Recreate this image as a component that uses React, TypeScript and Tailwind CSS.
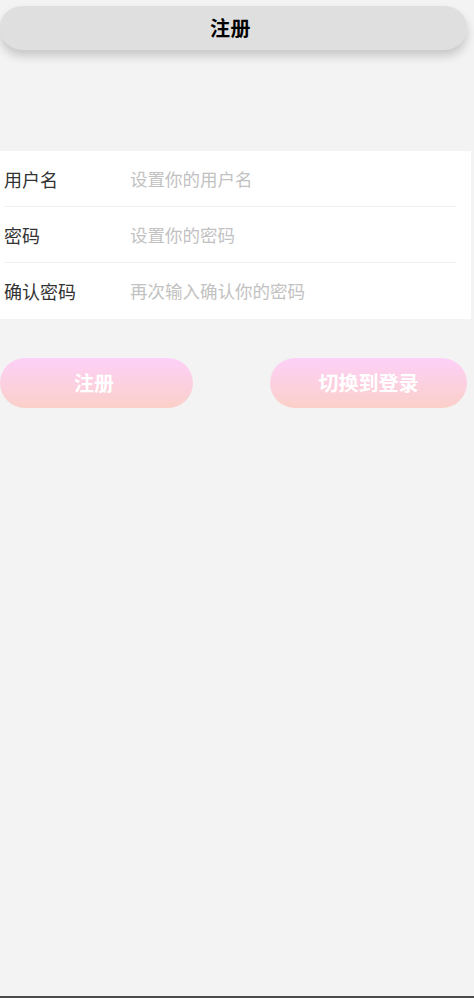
import { useState } from "react";

const fields = [
  { label: "用户名", placeholder: "设置你的用户名", type: "text" },
  { label: "密码", placeholder: "设置你的密码", type: "password" },
  { label: "确认密码", placeholder: "再次输入确认你的密码", type: "password" },
];

export default function App() {
  const [values, setValues] = useState<string[]>(["", "", ""]);

  return (
    <div
      className="h-[998px] bg-[#f3f3f3] border-b-2 border-[#4a4a4a] pt-[6px] overflow-hidden"
      style={{ fontFamily: '"Noto Sans CJK SC", "Noto Sans", sans-serif' }}
    >
      {/* top title bar */}
      <div className="w-[467px] h-[44px] rounded-full bg-[#dfdfdf] shadow-[0_6px_10px_rgba(0,0,0,0.18)] flex items-center justify-center pr-[6px]">
        <h1 className="text-[20px] font-bold text-black tracking-wide">注册</h1>
      </div>

      {/* form */}
      <div className="mt-[101px] w-[471px] bg-white">
        {fields.map((f, i) => (
          <div key={f.label} className="h-[56px] flex items-center relative">
            <label className="w-[130px] pl-[4px] text-[18px] text-[#333]">
              {f.label}
            </label>
            <input
              type={f.type}
              value={values[i]}
              onChange={(e) => {
                const next = [...values];
                next[i] = e.target.value;
                setValues(next);
              }}
              placeholder={f.placeholder}
              className="flex-1 text-[17.5px] text-[#333] placeholder:text-[#c2c2c2] outline-none bg-transparent"
            />
            {i < fields.length - 1 && (
              <div className="absolute bottom-0 left-[4px] w-[452px] h-px bg-[#f0f0f0]" />
            )}
          </div>
        ))}
      </div>

      {/* actions */}
      <div className="mt-[39px] w-[467px] flex justify-between">
        <button className="w-[193px] h-[50px] rounded-full bg-gradient-to-b from-[#fdd0f8] to-[#fbd0c8] text-white text-[20px] font-bold pr-[5px]">
          注册
        </button>
        <button className="w-[197px] h-[50px] rounded-full bg-gradient-to-b from-[#fdd0f8] to-[#fbd0c8] text-white text-[20px] font-bold">
          切换到登录
        </button>
      </div>
    </div>
  );
}
